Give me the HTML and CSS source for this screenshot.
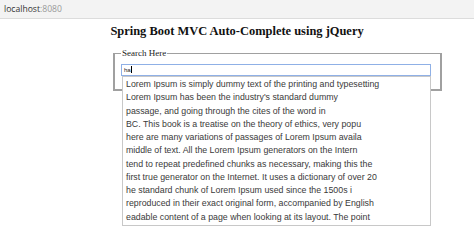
FILE: index.html
```html
<!DOCTYPE html>
<html>
<head>
<meta charset="utf-8">
<link rel="stylesheet" href="styles.css">
</head>
<body>
<div class="addr"><span class="host">localhost</span><span class="port">:8080</span></div>
<h1 class="title">Spring Boot MVC Auto-Complete using jQuery</h1>
<fieldset class="box">
  <legend class="legend">Search Here</legend>
  <div class="field">
    <div class="input">ha<span class="caret"></span></div>
    <ul class="menu">
      <li>Lorem Ipsum is simply dummy text of the printing and typesetting</li>
      <li>Lorem Ipsum has been the industry's standard dummy</li>
      <li>passage, and going through the cites of the word in</li>
      <li>BC. This book is a treatise on the theory of ethics, very popu</li>
      <li>here are many variations of passages of Lorem Ipsum availa</li>
      <li>middle of text. All the Lorem Ipsum generators on the Intern</li>
      <li>tend to repeat predefined chunks as necessary, making this the</li>
      <li>first true generator on the Internet. It uses a dictionary of over 20</li>
      <li>he standard chunk of Lorem Ipsum used since the 1500s i</li>
      <li>reproduced in their exact original form, accompanied by English</li>
      <li>eadable content of a page when looking at its layout. The point</li>
    </ul>
  </div>
</fieldset>
</body>
</html>
```
FILE: styles.css
```css
html, body {
  margin: 0;
  padding: 0;
  background: #fff;
  overflow: hidden;
}
body {
  width: 474px;
  height: 241px;
  font-family: "Liberation Serif", serif;
}
.addr {
  height: 19px;
  box-sizing: border-box;
  background: #f3f3f3;
  border-bottom: 1px solid #dcdcdc;
  padding-left: 4px;
  font-family: "Open Sans", "Liberation Sans", sans-serif;
  font-size: 8.6px;
  line-height: 18px;
}
.host { color: #333; }
.port { color: #9a9a9a; }
.title {
  margin: 5px 0 0;
  text-align: center;
  font-size: 12.45px;
  line-height: 15px;
  font-weight: bold;
  color: #111;
}
.box {
  margin: 9px 0 0 113px;
  width: 329px;
  height: 43px;
  box-sizing: border-box;
  border: 2px solid #a0a0a0;
  border-top-width: 1px;
  padding: 0 0 0 6px;
}
.legend {
  font-size: 9px;
  padding: 0 1px;
  color: #222;
  line-height: 10px;
}
.field {
  position: relative;
  margin-top: 6px;
  width: 310px;
}
.input {
  height: 12px;
  box-sizing: border-box;
  border: 1px solid #8fb0e6;
  font-family: "Liberation Sans", sans-serif;
  font-size: 6px;
  line-height: 10px;
  padding-left: 2px;
  color: #222;
  background: #fff;
}
.caret {
  display: inline-block;
  width: 1px;
  height: 7px;
  background: #000;
  vertical-align: -1px;
}
.menu {
  position: absolute;
  left: 1px;
  top: 12px;
  width: 309px;
  height: 150px;
  box-sizing: border-box;
  margin: 0;
  padding: 1px 0 0 3px;
  list-style: none;
  background: #fff;
  border: 1px solid #c8c8c8;
  overflow: hidden;
  font-family: "Liberation Sans", sans-serif;
  font-size: 8.8px;
  line-height: 13.25px;
  color: #3a3a3a;
  white-space: nowrap;
}
```
